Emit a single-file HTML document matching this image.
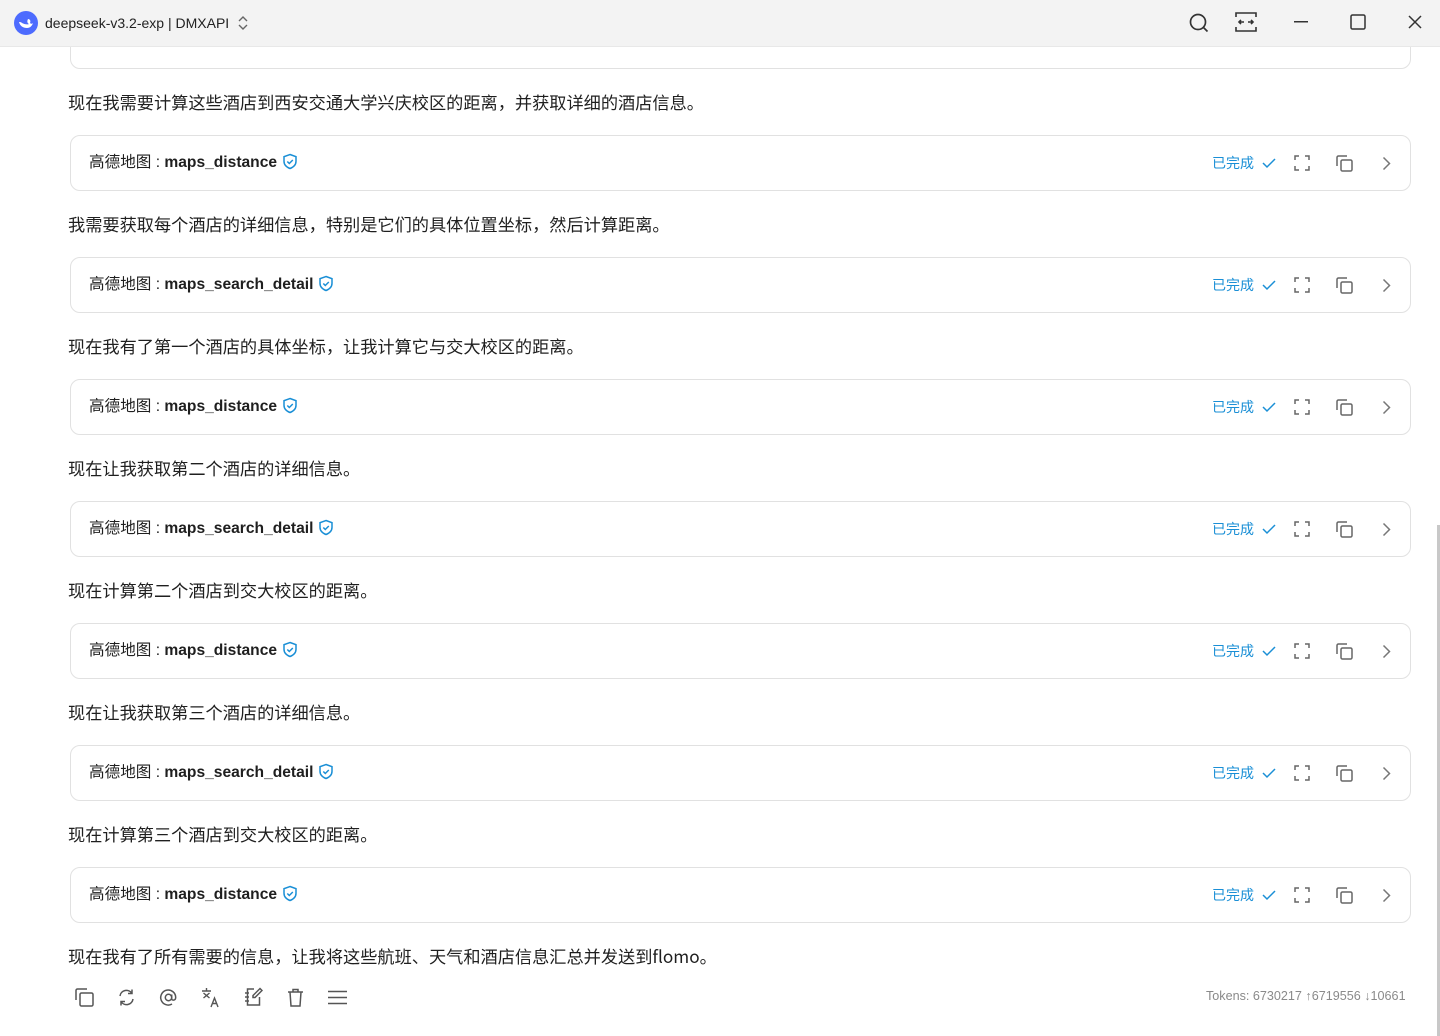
<!DOCTYPE html>
<html><head><meta charset="utf-8"><style>
*{margin:0;padding:0;box-sizing:border-box}
body{width:1440px;height:1036px;overflow:hidden;background:#fff;font-family:"Liberation Sans","Noto Sans CJK SC",sans-serif;color:#1f1f1f;position:relative}
.tb{position:absolute;left:0;top:0;width:1440px;height:47px;background:#f3f3f3;border-bottom:1px solid #e8e8e8;z-index:5}
.title{position:absolute;left:45px;top:15px;font-size:14px;color:#222;font-family:"Liberation Sans",sans-serif}
.card{position:absolute;left:70px;width:1341px;height:56px;border:1px solid #e1e1e1;border-radius:10px;background:#fff}
.name{position:absolute;left:18px;top:14px;font-size:15.6px;color:#1f1f1f;font-family:"Liberation Sans","Noto Sans CJK SC",sans-serif;white-space:nowrap}
.name b{font-weight:600}
.name svg{display:inline-block;vertical-align:-3px;margin-left:5px}
.done{position:absolute;left:1141px;top:17px;font-size:14px;color:#1a8fd6;font-family:"Noto Sans CJK SC",sans-serif}
.ic{position:absolute}
.p{position:absolute;left:68px;font-size:17.2px;color:#1f1f1f;font-family:"Noto Sans CJK SC",sans-serif;line-height:24px;white-space:nowrap}
.tok{position:absolute;left:1206px;top:989px;font-size:12.6px;color:#8a8a8a;font-family:"Liberation Sans",sans-serif}
</style></head><body>
<div class="tb">
<svg class="ic" style="left:14px;top:11px" width="24" height="24" viewBox="0 0 24 24"><circle cx="12" cy="12" r="12" fill="#4d6bfe"/><path d="M5 11c1 4 4 6 8 6 3 0 5-2 6-5-1 1-2 1-3 0 1-2 0-4-2-4-1 2-1 4 1 5-2 1-5 0-7-1-1-1-2-1-3-1z" fill="#fff"/></svg>
<div class="title">deepseek-v3.2-exp | DMXAPI</div>
<svg class="ic" style="left:237px;top:15px" width="12" height="16" viewBox="0 0 12 16" fill="none" stroke="#666" stroke-width="1.4"><path d="M2 6l4-4 4 4M2 10l4 4 4-4"/></svg>
<svg class="ic" style="left:1187px;top:11px" width="24" height="24" viewBox="0 0 24 24" fill="none" stroke="#333" stroke-width="1.7"><circle cx="11" cy="11" r="7.5"/><path d="M16.5 16.5l4 4"/></svg>
<svg class="ic" style="left:1235px;top:12px" width="22" height="20" viewBox="0 0 22 20" fill="none" stroke="#333" stroke-width="1.6"><path d="M1 5V1h20v4M1 15v4h20v-4M4 10h5M6 8l-2 2 2 2M13 10h5M16 8l2 2-2 2"/></svg>
<svg class="ic" style="left:1294px;top:21px" width="14" height="2"><rect width="14" height="1.5" fill="#333"/></svg>
<svg class="ic" style="left:1350px;top:14px" width="16" height="16" viewBox="0 0 16 16" fill="none" stroke="#333" stroke-width="1.5"><rect x="1" y="1" width="14" height="14" rx="1.5"/></svg>
<svg class="ic" style="left:1408px;top:15px" width="14" height="14" viewBox="0 0 14 14" fill="none" stroke="#333" stroke-width="1.5"><path d="M1 1l12 12M13 1L1 13"/></svg>
</div>
<div class="card" style="top:12px;height:57px"></div>

<div class="p" style="top:90px">现在我需要计算这些酒店到西安交通大学兴庆校区的距离，并获取详细的酒店信息。</div>
<div class="p" style="top:212px">我需要获取每个酒店的详细信息，特别是它们的具体位置坐标，然后计算距离。</div>
<div class="p" style="top:334px">现在我有了第一个酒店的具体坐标，让我计算它与交大校区的距离。</div>
<div class="p" style="top:456px">现在让我获取第二个酒店的详细信息。</div>
<div class="p" style="top:578px">现在计算第二个酒店到交大校区的距离。</div>
<div class="p" style="top:700px">现在让我获取第三个酒店的详细信息。</div>
<div class="p" style="top:822px">现在计算第三个酒店到交大校区的距离。</div>
<div class="p" style="top:944px">现在我有了所有需要的信息，让我将这些航班、天气和酒店信息汇总并发送到flomo。</div>

<div id="cards"></div>
<script>
var tops=[135,257,379,501,623,745,867];
var names=["maps_distance","maps_search_detail","maps_distance","maps_search_detail","maps_distance","maps_search_detail","maps_distance"];
var h="";
for(var i=0;i<7;i++){
h+='<div class="card" style="top:'+tops[i]+'px"><div class="name">高德地图 : <b>'+names[i]+'</b>'+
'<svg width="16" height="17" viewBox="0 0 16 17" fill="none" stroke="#1a8fd6" stroke-width="1.5"><path d="M8 1.5l6 2.2v4.5c0 3.5-2.7 6-6 7.3-3.3-1.3-6-3.8-6-7.3V3.7z"/><path d="M5.3 8.5l2 2 3.5-3.5"/></svg></div>'+
'<div class="done">已完成</div>'+
'<svg class="ic" style="left:1191px;top:21px" width="14" height="12" viewBox="0 0 14 12" fill="none" stroke="#1a8fd6" stroke-width="1.5"><path d="M1 6l4 4 8-8"/></svg>'+
'<svg class="ic" style="left:1223px;top:19px" width="16" height="16" viewBox="0 0 16 16" fill="none" stroke="#666" stroke-width="1.5"><path d="M1 5V1h4M11 1h4v4M15 11v4h-4M5 15H1v-4"/></svg>'+
'<svg class="ic" style="left:1265px;top:19px" width="17" height="17" viewBox="0 0 17 17" fill="none" stroke="#666" stroke-width="1.5"><path d="M1 11V2.5A1.5 1.5 0 0 1 2.5 1H11"/><rect x="5" y="5" width="11" height="11" rx="1.5"/></svg>'+
'<svg class="ic" style="left:1311px;top:20px" width="9" height="15" viewBox="0 0 9 15" fill="none" stroke="#777" stroke-width="1.5"><path d="M1.5 1.5l6 6-6 6"/></svg></div>';}
document.getElementById("cards").outerHTML=h;
</script>

<svg class="ic" style="left:75px;top:988px" width="19" height="19" viewBox="0 0 19 19" fill="none" stroke="#555" stroke-width="1.5"><path d="M1 12V2.5A1.5 1.5 0 0 1 2.5 1H12"/><rect x="5" y="5" width="13" height="13" rx="1.5"/></svg>
<svg class="ic" style="left:117px;top:988px" width="19" height="19" viewBox="0 0 19 19" fill="none" stroke="#555" stroke-width="1.5"><path d="M3 8a6.5 6.5 0 0 1 12-2.5M16 11a6.5 6.5 0 0 1-12 2.5M15 1.5v4h-4M4 17.5v-4h4"/></svg>
<svg class="ic" style="left:159px;top:988px" width="19" height="19" viewBox="0 0 19 19" fill="none" stroke="#555" stroke-width="1.5"><circle cx="9.5" cy="9.5" r="3.2"/><path d="M12.7 6.5v4.5c0 1.5 3.8 2 4-1.5A7.5 7.5 0 1 0 13 16"/></svg>
<svg class="ic" style="left:201px;top:987px" width="20" height="21" viewBox="0 0 20 21" fill="none" stroke="#555" stroke-width="1.4"><path d="M1 4h9M5.5 1v3M2.5 6l6 5M8.5 6l-6 5M10 20l3.5-9 3.5 9M11.3 16.5h4.5"/></svg>
<svg class="ic" style="left:244px;top:987px" width="19" height="20" viewBox="0 0 19 20" fill="none" stroke="#555" stroke-width="1.5"><path d="M10 2H3.5v16h12v-8M1 6h4M1 10h4M1 14h4M16 1.5l2 2-7 7H9v-2z"/></svg>
<svg class="ic" style="left:287px;top:988px" width="17" height="19" viewBox="0 0 17 19" fill="none" stroke="#555" stroke-width="1.5"><path d="M1 4h15M6 4V1.5h5V4M3 4l1 14h9l1-14"/></svg>
<svg class="ic" style="left:328px;top:990px" width="19" height="15" viewBox="0 0 19 15" fill="none" stroke="#555" stroke-width="1.6"><path d="M0 1.5h19M0 7.5h19M0 13.5h19"/></svg>
<div class="tok">Tokens: 6730217 ↑6719556 ↓10661</div>
<div style="position:absolute;left:1437px;top:525px;width:3px;height:511px;background:#c8c8c8"></div>
</body></html>
